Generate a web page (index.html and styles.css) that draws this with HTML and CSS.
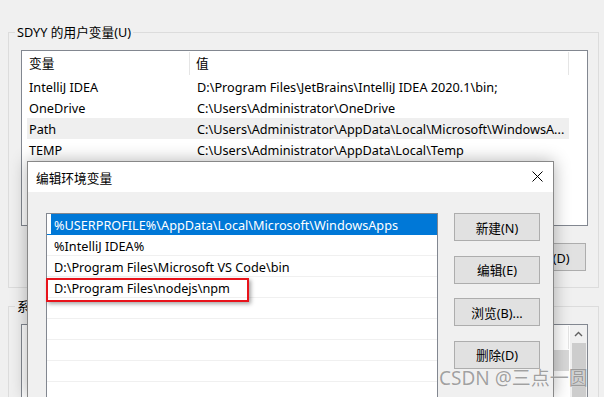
FILE: index.html
```html
<!DOCTYPE html>
<html lang="zh-CN">
<head>
    <meta charset="UTF-8">
    <title>环境变量</title>
    <link rel="stylesheet" href="styles.css">
</head>
<body>
    <div class="page">
        <fieldset class="group">
            <legend>SDYY 的用户变量(U)</legend>
            <div class="list user-list">
                <div class="list-head">
                    <div class="col col-name">变量</div>
                    <div class="col col-value">值</div>
                </div>
                <div class="list-row">
                    <div class="col col-name">IntelliJ IDEA</div>
                    <div class="col col-value">D:\Program Files\JetBrains\IntelliJ IDEA 2020.1\bin;</div>
                </div>
                <div class="list-row">
                    <div class="col col-name">OneDrive</div>
                    <div class="col col-value">C:\Users\Administrator\OneDrive</div>
                </div>
                <div class="list-row hover">
                    <div class="col col-name">Path</div>
                    <div class="col col-value">C:\Users\Administrator\AppData\Local\Microsoft\WindowsA...</div>
                </div>
                <div class="list-row">
                    <div class="col col-name">TEMP</div>
                    <div class="col col-value">C:\Users\Administrator\AppData\Local\Temp</div>
                </div>
            </div>
            <div class="group-buttons">
                <button class="win-btn">新建(N)...</button>
                <button class="win-btn">编辑(E)...</button>
                <button class="win-btn">删除(D)</button>
            </div>
        </fieldset>

        <fieldset class="group group-system">
            <legend>系统变量(S)</legend>
            <div class="list system-list">
                <div class="system-body">
                    <div class="list-head">
                        <div class="col col-name"></div>
                        <div class="col col-value"></div>
                    </div>
                    <div class="list-row inactive"></div>
                </div>
                <div class="scrollbar">
                    <div class="scroll-up">
                        <svg width="9" height="6" viewBox="0 0 9 6"><path d="M1 5 L4.5 1.5 L8 5" fill="none" stroke="#606060" stroke-width="1.4"/></svg>
                    </div>
                    <div class="scroll-thumb"></div>
                </div>
            </div>
        </fieldset>
    </div>

    <div class="dialog">
        <div class="dialog-title">
            <span>编辑环境变量</span>
            <svg class="close-icon" width="11" height="11" viewBox="0 0 11 11"><path d="M0.5 0.5 L10.5 10.5 M10.5 0.5 L0.5 10.5" stroke="#000" stroke-width="1"/></svg>
        </div>
        <div class="dialog-body">
            <div class="list path-list">
                <div class="path-row selected"><span>%USERPROFILE%\AppData\Local\Microsoft\WindowsApps</span></div>
                <div class="path-row"><span>%IntelliJ IDEA%</span></div>
                <div class="path-row"><span>D:\Program Files\Microsoft VS Code\bin</span></div>
                <div class="path-row"><span>D:\Program Files\nodejs\npm</span></div>
                <div class="path-row"></div>
                <div class="path-row"></div>
                <div class="path-row"></div>
                <div class="path-row"></div>
                <div class="path-row"></div>
            </div>
            <div class="dialog-buttons">
                <button class="win-btn">新建(N)</button>
                <button class="win-btn">编辑(E)</button>
                <button class="win-btn">浏览(B)...</button>
                <button class="win-btn">删除(D)</button>
            </div>
        </div>
        <div class="mark"></div>
    </div>

    <div class="watermark">CSDN @三点一圆</div>
</body>
</html>
```

FILE: styles.css
```css
body {
    margin: 0;
    width: 604px;
    height: 397px;
    overflow: hidden;
    position: relative;
    background-color: #f0f0f0;
    color: #000;
    font-family: "Noto Sans", "Noto Sans CJK SC", sans-serif;
    font-size: 12.7px;
}

.page {
    padding-top: 24px;
}

.group {
    margin: 0 5px 0 8px;
    padding: 10px 10px 16px 12px;
    border: 1px solid #dcdcdc;
    min-width: 0;
}

.group legend {
    margin-left: -6px;
    padding: 0 2px;
    line-height: 16px;
    height: 16px;
}

.group-system {
    margin-top: 10px;
    padding-bottom: 0;
}

.list {
    box-sizing: border-box;
    background-color: #fff;
    border: 1px solid #828790;
}

.user-list {
    height: 176px;
    overflow: hidden;
}

.list-head {
    display: flex;
    height: 25px;
    align-items: center;
}

.list-head .col {
    box-sizing: border-box;
    height: 23px;
    line-height: 23px;
    border-right: 1px solid #e5e5e5;
}

.list-head .col-name {
    width: 168px;
    padding-left: 7px;
}

.list-head .col-value {
    width: 379px;
    padding-left: 6px;
}

.list-row {
    display: flex;
    height: 21px;
    line-height: 22px;
    margin-left: 5px;
    width: 542px;
}

.list-row.hover {
    background-color: #efefef;
}

.list-row.inactive {
    background-color: #d9d9d9;
}

.list-row .col-name {
    width: 163px;
    padding-left: 2px;
    box-sizing: border-box;
}

.list-row .col-value {
    width: 379px;
    padding: 0 8px 0 7px;
    box-sizing: border-box;
    white-space: nowrap;
    overflow: hidden;
}

.group-buttons {
    display: flex;
    justify-content: flex-end;
    gap: 10px;
    margin-top: 17px;
    margin-right: 2px;
}

.win-btn {
    box-sizing: border-box;
    height: 28px;
    width: 75px;
    padding: 0;
    background-color: #e1e1e1;
    border: 1px solid #adadad;
    border-radius: 0;
    color: #000;
    font-family: inherit;
    font-size: 12.7px;
}

.system-list {
    display: flex;
    height: 80px;
}

.system-body {
    flex: 1;
    min-width: 0;
}

.scrollbar {
    width: 17px;
    background-color: #f0f0f0;
    display: flex;
    flex-direction: column;
    align-items: center;
}

.scroll-up {
    height: 18px;
    display: flex;
    align-items: center;
    justify-content: center;
}

.scroll-thumb {
    width: 14px;
    flex: 1;
    background-color: #cdcdcd;
}

/* edit dialog over the main window */
.dialog {
    position: absolute;
    left: 27px;
    top: 161px;
    width: 527px;
    height: 236px;
    box-sizing: border-box;
    background-color: #f0f0f0;
    border: 1px solid #888;
    border-bottom: none;
    box-shadow: 0 0 16px rgba(0, 0, 0, 0.3);
}

.dialog-title {
    height: 30px;
    background-color: #fff;
    display: flex;
    align-items: center;
    justify-content: space-between;
    padding: 0 10px 0 8px;
}

.close-icon {
    margin-top: -1px;
}

.dialog-body {
    display: flex;
    gap: 16px;
    padding: 21px 0 0 18px;
}

.path-list {
    width: 392px;
    height: 184px;
    border-bottom: none;
    overflow: hidden;
}

.path-row {
    height: 20px;
    line-height: 22px;
    border-bottom: 1px solid #f0f0f0;
    white-space: nowrap;
}

.path-row span {
    padding-left: 7px;
}

.path-row.selected {
    background: linear-gradient(to right, #fff 4px, #0078d7 4px);
    border-bottom-color: #0078d7;
    color: #fff;
}

.dialog-buttons {
    display: flex;
    flex-direction: column;
    gap: 14.5px;
}

.dialog-buttons .win-btn {
    width: 86px;
}

.mark {
    position: absolute;
    left: 18px;
    top: 116px;
    width: 203px;
    height: 24px;
    box-sizing: border-box;
    border: 2px solid #e8131b;
    box-shadow: 2px 2px 4px rgba(0, 0, 0, 0.35);
}

.watermark {
    position: absolute;
    left: 439px;
    top: 367px;
    font-family: "Noto Sans", "Noto Sans CJK SC", sans-serif;
    font-size: 19px;
    line-height: 22px;
    color: rgba(100, 100, 100, 0.6);
    text-shadow: 0 0 1px rgba(255, 255, 255, 0.8);
}
```
